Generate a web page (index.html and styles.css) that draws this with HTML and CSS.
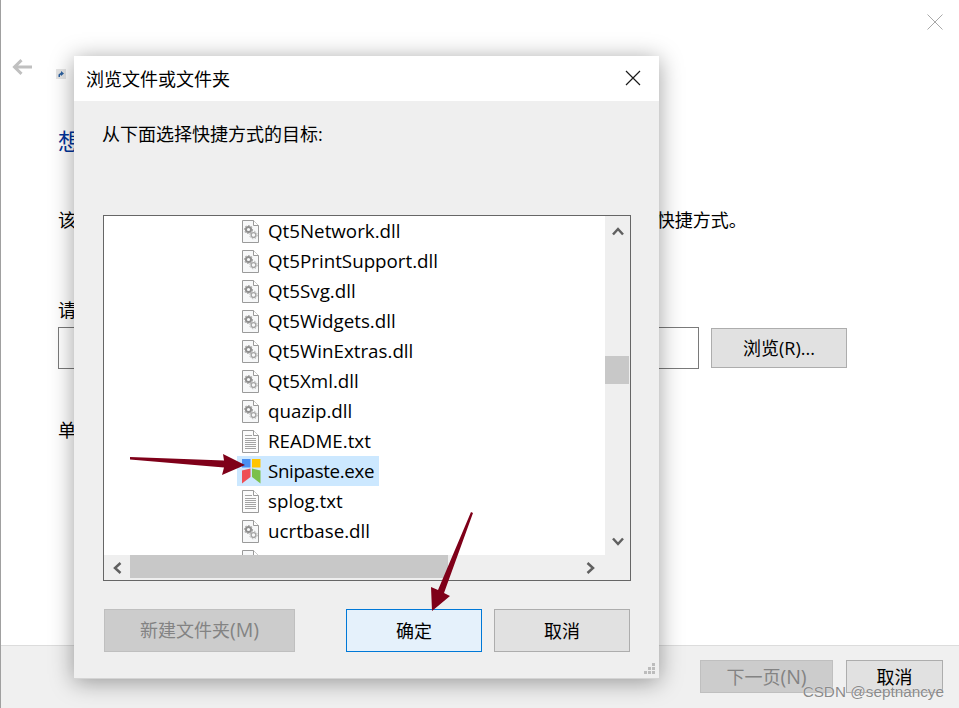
FILE: index.html
```html
<!DOCTYPE html>
<html lang="zh-CN">
<head>
<meta charset="utf-8">
<title>创建快捷方式</title>
<link rel="stylesheet" href="styles.css">
</head>
<body>
<svg class="defs" width="0" height="0" aria-hidden="true">
  <symbol id="doc-dll" viewBox="0 0 17 23">
    <path d="M.5.5h11l5 5v17H.5z" fill="#f7f8f9" stroke="#9a9a9a"/>
    <path d="M11.500.5v5h5" fill="#fff" stroke="#9a9a9a"/>
    <circle cx="6.500" cy="9.500" r="2.600" fill="none" stroke="#8f8f8f" stroke-width="2"/>
    <circle cx="6.500" cy="9.500" r="4" fill="none" stroke="#a9a9a9" stroke-width="1.200" stroke-dasharray="1.500 1.500"/>
    <circle cx="11.500" cy="15" r="2.400" fill="none" stroke="#a5a5a5" stroke-width="1.400"/>
    <circle cx="11.500" cy="15" r="3.800" fill="none" stroke="#b5b5b5" stroke-width="1" stroke-dasharray="1.500 1.500"/>
  </symbol>
  <symbol id="doc-txt" viewBox="0 0 17 23">
    <path d="M.5.5h11l5 5v17H.5z" fill="#fbfbfb" stroke="#9a9a9a"/>
    <path d="M11.500.5v5h5" fill="#fff" stroke="#9a9a9a"/>
    <path d="M3 5.500h7M3 8.500h11M3 10.500h11M3 12.500h11M3 14.500h11M3 16.500h11M3 18.500h11" stroke="#a3a3a3" fill="none"/>
  </symbol>
</svg>

<div class="wizard">
  <main class="wizard-body">
    <div class="wizard-top">
      <svg class="back" width="21" height="16" viewBox="0 0 21 16"><path d="M20 8H3M9.500 1.200 2.500 8l7 6.800" fill="none" stroke="#c0c0c0" stroke-width="3"/></svg>
      <svg class="shortcut" width="10" height="10" viewBox="0 0 10 10"><rect width="10" height="10" fill="#e4e4e4"/><path d="M2.500 8V5.500L5 3.500V2l3 2.500L5 7V5.500L4 6.500V8z" fill="#2a5f9e"/></svg>
    </div>
    <h1 class="wizard-title">想为哪个对象创建快捷方式?</h1>
    <p class="wizard-intro">该向导帮你创建本地或网络程序、文件、文件夹、计算机或 Internet 地址的快捷方式。</p>
    <label class="wizard-label">请键入对象的位置(T):</label>
    <div class="path-row">
      <div class="path-input"></div>
      <button class="btn btn-browse">浏览(R)...</button>
    </div>
    <p class="wizard-hint">单击“下一页”继续。</p>
  </main>
  <footer class="wizard-footer">
    <button class="btn btn-disabled btn-next">下一页<span class="lat">(N)</span></button>
    <button class="btn btn-cancel-main">取消</button>
  </footer>
</div>

<svg class="wizard-close" width="16" height="16" viewBox="0 0 16 16"><path d="M.5.5l15 15M15.500.5l-15 15" stroke="#a8a8a8" fill="none"/></svg>

<section class="dialog">
  <header class="dialog-title">
    <span>浏览文件或文件夹</span>
    <svg width="16" height="16" viewBox="0 0 16 16"><path d="M1 1l14 14M15 1 1 15" stroke="#1a1a1a" fill="none" stroke-width="1.200"/></svg>
  </header>
  <div class="dialog-body">
    <p class="dialog-text">从下面选择快捷方式的目标:</p>
    <div class="tree">
      <ul class="tree-list">
        <li class="row"><span class="item"><svg class="ico"><use href="#doc-dll"/></svg>Qt5Network.dll</span></li>
        <li class="row"><span class="item"><svg class="ico"><use href="#doc-dll"/></svg>Qt5PrintSupport.dll</span></li>
        <li class="row"><span class="item"><svg class="ico"><use href="#doc-dll"/></svg>Qt5Svg.dll</span></li>
        <li class="row"><span class="item"><svg class="ico"><use href="#doc-dll"/></svg>Qt5Widgets.dll</span></li>
        <li class="row"><span class="item"><svg class="ico"><use href="#doc-dll"/></svg>Qt5WinExtras.dll</span></li>
        <li class="row"><span class="item"><svg class="ico"><use href="#doc-dll"/></svg>Qt5Xml.dll</span></li>
        <li class="row"><span class="item"><svg class="ico"><use href="#doc-dll"/></svg>quazip.dll</span></li>
        <li class="row"><span class="item"><svg class="ico"><use href="#doc-txt"/></svg>README.txt</span></li>
        <li class="row"><span class="item selected"><svg class="ico-app" width="20" height="26" viewBox="0 0 20 26"><rect x="1" y="1" width="8.500" height="8.500" fill="#4a90f2"/><rect x="11" y="1" width="8.500" height="8.500" fill="#ffc400"/><path d="M1 12.500 9.500 10.500V19L1 25.500z" fill="#ee4f55"/><path d="M11 10.500l8.500 2v13L11 19z" fill="#7cc04a"/></svg>Snipaste.exe</span></li>
        <li class="row"><span class="item"><svg class="ico"><use href="#doc-txt"/></svg>splog.txt</span></li>
        <li class="row"><span class="item"><svg class="ico"><use href="#doc-dll"/></svg>ucrtbase.dll</span></li>
        <li class="row"><span class="item"><svg class="ico"><use href="#doc-dll"/></svg></span></li>
      </ul>
      <div class="vbar">
        <svg class="chev" width="12" height="10" viewBox="0 0 12 10"><path d="M1 8.500 6 3l5 5.500" fill="none" stroke="#606060" stroke-width="2.500"/></svg>
        <div class="vthumb"></div>
        <svg class="chev" width="12" height="10" viewBox="0 0 12 10"><path d="M1 1.500 6 7l5-5.500" fill="none" stroke="#606060" stroke-width="2.500"/></svg>
      </div>
      <div class="hbar">
        <svg class="chev" width="10" height="12" viewBox="0 0 10 12"><path d="M8.500 1 3 6l5.500 5" fill="none" stroke="#606060" stroke-width="2.500"/></svg>
        <div class="hthumb"></div>
        <svg class="chev" width="10" height="12" viewBox="0 0 10 12"><path d="M1.500 1 7 6l-5.500 5" fill="none" stroke="#606060" stroke-width="2.500"/></svg>
      </div>
      <div class="corner"></div>
    </div>
    <div class="dialog-actions">
      <button class="btn btn-disabled btn-new">新建文件夹<span class="lat">(M)</span></button>
      <button class="btn btn-primary">确定</button>
      <button class="btn btn-cancel">取消</button>
    </div>
  </div>
  <svg class="grip" width="12" height="12" viewBox="0 0 12 12"><path d="M8 0h3v3H8zM4 4h3v3H4zM8 4h3v3H8zM0 8h3v3H0zM4 8h3v3H4zM8 8h3v3H8z" fill="#bcbcbc"/></svg>
</section>

<svg class="annot" width="959" height="708" viewBox="0 0 959 708">
  <path d="M130 457l94 3.500-1-6.500 22 11-23 10 2-7.500-94-8z" fill="#7f0019"/>
  <path d="M471 512l2 1-29 80 6 3-18 15-1-24 7 3z" fill="#7f0019"/>
</svg>

<div class="watermark">CSDN @septnancye</div>
</body>
</html>
```

FILE: styles.css
```css
* { box-sizing: border-box; }
html, body { margin: 0; padding: 0; }
body {
  width: 959px;
  height: 708px;
  overflow: hidden;
  position: relative;
  background: #fff;
  color: #000;
  font-family: "Open Sans", "Noto Sans CJK SC", sans-serif;
  font-size: 18px;
}
.defs { position: absolute; }
p, h1, ul { margin: 0; padding: 0; }

.wizard {
  height: 708px;
  display: flex;
  flex-direction: column;
  border-left: 1px solid #a0a0a0;
}
.wizard-body { flex: 1; padding: 59px 0 0 11px; background: #fff; }
.wizard-top { display: flex; align-items: flex-start; height: 16px; gap: 23px; }
.back { flex: none; }
.shortcut { flex: none; margin-top: 10px; }
.wizard-title {
  margin: 50px 0 0 46px;
  font-size: 23px;
  line-height: 32px;
  font-weight: 400;
  color: #003399;
  white-space: nowrap;
}
.wizard-intro { margin: 48px 0 0 46px; line-height: 30px; white-space: nowrap; }
.wizard-label { display: block; margin: 60px 0 0 46px; line-height: 30px; }
.path-row { display: flex; align-items: center; gap: 12px; margin: 2px 0 0 46px; }
.path-input { width: 641px; height: 42px; border: 1px solid #7a7a7a; background: #fff; }
.wizard-hint { margin: 46px 0 0 46px; line-height: 30px; }

.btn {
  display: block;
  padding: 0 0 2px;
  font: inherit;
  color: #000;
  background: #e1e1e1;
  border: 1px solid #adadad;
  text-align: center;
}
.btn-browse { width: 136px; height: 40px; }
.btn-disabled { background: #cccccc; border-color: #bfbfbf; color: #838383; }
.lat { font-size: 19.500px; }

.wizard-footer {
  height: 63px;
  display: flex;
  justify-content: flex-end;
  align-items: flex-start;
  gap: 13px;
  padding: 14px 16px 0 0;
  background: #f0f0f0;
  border-top: 1px solid #dcdcdc;
}
.btn-next { width: 133px; height: 33px; line-height: 28px; padding: 0; }
.btn-cancel-main { width: 97px; height: 33px; line-height: 28px; padding: 0; }

.wizard-close { position: absolute; left: 927px; top: 14px; }

.dialog {
  position: absolute;
  left: 74px;
  top: 56px;
  width: 585px;
  height: 623px;
  background: #efefef;
  box-shadow: 0 3px 22px rgba(0, 0, 0, .38);
  border-bottom: 1px solid #d4d4d4;
}
.dialog-title {
  height: 45px;
  display: flex;
  align-items: center;
  justify-content: space-between;
  padding: 0 18px 2px 12px;
  background: #fff;
}
.dialog-body { padding: 19px 28px 0 29px; }
.dialog-text { line-height: 28px; margin-left: -1px; }
.tree {
  margin-top: 67px;
  width: 528px;
  height: 366px;
  border: 1px solid #666;
  display: grid;
  grid-template-columns: 501px 25px;
  grid-template-rows: 339px 25px;
  background: #efefef;
}
.tree-list { list-style: none; background: #fff; overflow: hidden; padding-left: 133px; }
.row { height: 30px; display: flex; }
.item { display: flex; align-items: center; padding: 0 5px 2px; height: 30px; white-space: nowrap; font-size: 18.750px; }
.item.selected { background: #cce8ff; letter-spacing: -.35px; }
.ico { width: 17px; height: 23px; margin: 2px 9px 0 0; flex: none; }
.ico-app { margin: 2px 7px 0 -1px; flex: none; }

.vbar { display: flex; flex-direction: column; align-items: flex-start; }
.vbar .chev { margin: 10px 0 0 7px; }
.vbar .chev:last-child { margin-top: 153px; }
.vthumb { width: 24px; height: 28px; margin-top: 120px; background: #c8c8c8; }
.hbar { display: flex; align-items: flex-start; }
.hbar .chev { margin: 7px 0 0 8px; flex: none; }
.hbar .chev:last-child { margin-left: 138px; }
.hthumb { width: 318px; height: 23px; margin-left: 8px; background: #c8c8c8; }

.dialog-actions { display: flex; margin: 28px 0 0 1px; }
.btn-new { width: 191px; height: 43px; }
.btn-primary { width: 136px; height: 43px; margin-left: 51px; background: #e5f1fb; border-color: #0078d7; }
.btn-cancel { width: 136px; height: 43px; margin-left: 12px; }
.grip { position: absolute; right: 3px; bottom: 3px; }

.annot { position: absolute; left: 0; top: 0; pointer-events: none; }
.watermark {
  position: absolute;
  right: 15px;
  top: 682px;
  font-family: "Liberation Sans", sans-serif;
  font-size: 15.300px;
  line-height: 20px;
  color: #8a8a8a;
  text-shadow: 0 0 1px #fff;
  white-space: nowrap;
}
```
